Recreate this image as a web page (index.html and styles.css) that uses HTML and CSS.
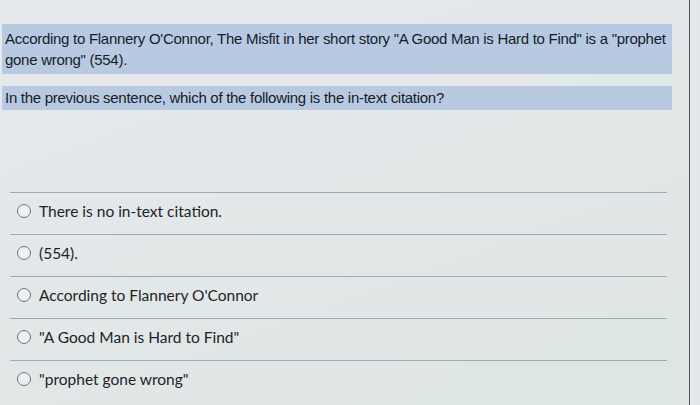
FILE: index.html
```html
<!DOCTYPE html>
<html lang="en">

<head>
    <meta charset="UTF-8">
    <meta name="viewport" content="width=device-width, initial-scale=1.0">
    <title>Quiz Question</title>
    <link rel="stylesheet" href="styles.css">
</head>

<body>
    <div class="screen">
        <div class="question">
            <p class="prompt">According to Flannery O'Connor, The Misfit in her short story "A Good Man is Hard to Find" is a "prophet gone wrong" (554).</p>
            <p class="prompt ask">In the previous sentence, which of the following is the in-text citation?</p>
        </div>

        <div class="answers">
            <label class="answer"><span class="radio"></span>There is no in-text citation.</label>
            <label class="answer"><span class="radio"></span>(554).</label>
            <label class="answer"><span class="radio"></span>According to Flannery O'Connor</label>
            <label class="answer"><span class="radio"></span>"A Good Man is Hard to Find"</label>
            <label class="answer"><span class="radio"></span>"prophet gone wrong"</label>
        </div>
    </div>
</body>

</html>
```

FILE: styles.css
```css
body {
    margin: 0;
    background-color: #e3e8ea;
    height: 405px;
    overflow: hidden;
}

.screen {
    width: 689px;
    height: 405px;
    border-right: 1px solid #4a5560;
    background: linear-gradient(160deg, #e6e9ec 0%, #e2e7e8 55%, #dde6e2 100%);
}

.question {
    padding-top: 24px;
    width: 670px;
    margin-left: 2px;
}

.prompt {
    margin: 0;
    background-color: #b8cae2;
    color: #141c2a;
    font-family: "Liberation Sans", Arial, sans-serif;
    font-size: 15px;
    letter-spacing: -0.28px;
    line-height: 21px;
    padding: 4px 0 4px 3px;
}

.ask {
    margin-top: 12px;
    padding: 1px 3px 2px 3px;
}

.answers {
    margin-top: 82px;
    margin-left: 10px;
    width: 657px;
}

.answer {
    display: flex;
    align-items: center;
    height: 42px;
    padding-bottom: 6px;
    box-sizing: border-box;
    border-top: 1px solid #9aaab8;
    font-family: Lato, "Open Sans", sans-serif;
    font-size: 15.5px;
    color: #202429;
}

.radio {
    width: 12px;
    height: 12px;
    border: 1.5px solid #6c7379;
    border-radius: 50%;
    margin-left: 7px;
    margin-right: 8px;
    background-color: #eef0f1;
}
```
